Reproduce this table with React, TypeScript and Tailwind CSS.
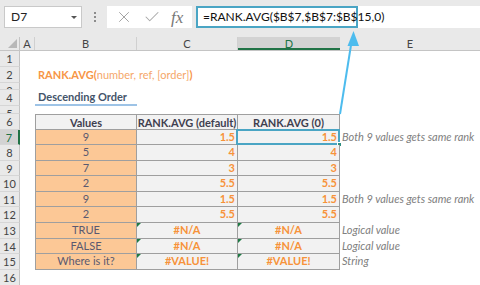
import { X, Check } from "lucide-react";

const rows = [
  { n: 1, h: "h-[16px]" },
  { n: 2, h: "h-[16px]" },
  { n: 3, h: "h-[7px]" },
  { n: 4, h: "h-[16px]" },
  { n: 5, h: "h-[8px]" },
  { n: 6, h: "h-[16px]" },
];

const data = [
  { n: 7, h: "h-[15px]", v: "9", c: "1.5", d: "1.5", note: "Both 9 values gets same rank" },
  { n: 8, h: "h-[16px]", v: "5", c: "4", d: "4" },
  { n: 9, h: "h-[15px]", v: "7", c: "3", d: "3" },
  { n: 10, h: "h-[16px]", v: "2", c: "5.5", d: "5.5" },
  { n: 11, h: "h-[15px]", v: "9", c: "1.5", d: "1.5", note: "Both 9 values gets same rank" },
  { n: 12, h: "h-[16px]", v: "2", c: "5.5", d: "5.5" },
  { n: 13, h: "h-[16px]", v: "TRUE", c: "#N/A", d: "#N/A", note: "Logical value", err: true },
  { n: 14, h: "h-[15px]", v: "FALSE", c: "#N/A", d: "#N/A", note: "Logical value", err: true },
  { n: 15, h: "h-[16px]", v: "Where is it?", c: "#VALUE!", d: "#VALUE!", note: "String", err: true },
];

const RowHead = ({ n, active }: { n: number; active?: boolean }) => (
  <div
    className={
      "w-[20px] shrink-0 h-full flex items-start justify-center overflow-hidden border-b border-[#d6d6d6] text-[11px] leading-[15px] " +
      (active
        ? "bg-[#d3d3d3] text-[#217346] border-r-2 border-r-[#217346]"
        : "bg-[#e9e9e9] text-[#444] border-r border-r-[#c4c4c4]")
    }
  >
    {n}
  </div>
);

const ErrMark = () => (
  <span className="absolute left-0 top-0 w-0 h-0 border-t-[4px] border-t-[#1e7a44] border-r-[4px] border-r-transparent" />
);

export default function App() {
  return (
    <div className="relative w-[480px] h-[285px] overflow-hidden bg-white font-['Lato',sans-serif]">
      {/* formula bar */}
      <div className="h-[37px] bg-[#e9e9e9] flex items-start pt-[6px]">
        <div className="ml-[4px] w-[78px] h-[22px] bg-white border border-[#c9c9c9] flex items-center justify-between pl-[6px] pr-[4px] text-[12px] text-[#222]">
          <span>D7</span>
          <span className="w-0 h-0 border-l-[3px] border-r-[3px] border-t-[3px] border-l-transparent border-r-transparent border-t-[#555]" />
        </div>
        <div className="w-[25px] h-[22px] flex flex-col items-center justify-center gap-[2px]">
          <span className="w-[2px] h-[2px] bg-[#8c8c8c]" />
          <span className="w-[2px] h-[2px] bg-[#8c8c8c]" />
          <span className="w-[2px] h-[2px] bg-[#8c8c8c]" />
        </div>
        <div className="w-[85px] h-[22px] bg-white flex items-center pl-[8px]">
          <X size={18} strokeWidth={1.2} className="text-[#9a9a9a]" />
          <Check size={18} strokeWidth={1.4} className="text-[#a8a8a8] ml-[10px]" />
          <span className="ml-[10px] font-['Liberation_Serif',serif] italic text-[17px] leading-none text-[#777]">fx</span>
        </div>
        <div className="ml-[4px] flex-1 h-[22px] bg-white">
          <div className="w-[162px] h-[22px] border-2 border-[#4aa5c4] flex items-center pl-[5px] text-[12px] text-[#111] whitespace-nowrap">
            =RANK.AVG($B$7,$B$7:$B$15,0)
          </div>
        </div>
      </div>

      {/* column headers */}
      <div className="flex h-[14px] bg-[#e9e9e9] text-[11px] leading-[13px] text-[#444] border-b border-[#c4c4c4]">
        <div className="w-[20px] relative border-r border-[#c4c4c4]">
          <span className="absolute right-[2px] bottom-[2px] w-0 h-0 border-l-[9px] border-l-transparent border-b-[9px] border-b-[#b8b8b8]" />
        </div>
        <div className="w-[15px] text-center border-r border-[#d0d0d0]">A</div>
        <div className="w-[102px] text-center border-r border-[#d0d0d0]">B</div>
        <div className="w-[101px] text-center border-r border-[#d0d0d0]">C</div>
        <div className="w-[102px] text-center bg-[#d3d3d3] text-[#217346] border-b-2 border-[#217346]">D</div>
        <div className="flex-1 text-center">E</div>
      </div>

      {/* rows 1-6 */}
      {rows.map((r) => (
        <div key={r.n} className={"flex " + r.h}>
          <RowHead n={r.n} />
          <div className="w-[15px]" />
          {r.n === 2 && (
            <div className="pl-[3px] text-[11px] leading-[16px] whitespace-nowrap text-[#f79646]">
              <span className="font-bold">RANK.AVG(</span>
              <span className="text-[#f5a76a]">number, ref, [order]</span>
              <span className="font-bold">)</span>
            </div>
          )}
          {r.n === 4 && (
            <div className="w-[102px] pl-[3px] text-[11px] leading-[14px] font-bold text-[#44546a] border-b-2 border-[#9dc3e6]">
              Descending Order
            </div>
          )}
          {r.n === 6 && (
            <>
              <div className="w-[102px] text-center text-[11px] leading-[15px] font-bold text-[#3f3f4f] bg-[#f2f2f2] border border-[#9f9f9f]">
                Values
              </div>
              <div className="w-[101px] text-center text-[11px] leading-[15px] font-bold text-[#3f3f4f] bg-[#f2f2f2] border-y border-r border-[#9f9f9f] whitespace-nowrap">
                RANK.AVG (default)
              </div>
              <div className="w-[102px] text-center text-[11px] leading-[15px] font-bold text-[#3f3f4f] bg-[#f2f2f2] border-y border-r border-[#9f9f9f]">
                RANK.AVG (0)
              </div>
            </>
          )}
        </div>
      ))}

      {/* data rows */}
      {data.map((r) => (
        <div key={r.n} className={"flex " + r.h}>
          <RowHead n={r.n} active={r.n === 7} />
          <div className="w-[15px]" />
          <div className="w-[102px] text-center text-[11px] leading-[14px] text-[#595970] bg-[#fcc896] border-x border-b border-[#9f9f9f]">
            {r.v}
          </div>
          <div
            className={
              "relative w-[101px] text-[11px] leading-[14px] font-bold text-[#f7923a] bg-[#f2f2f2] border-r border-b border-[#9f9f9f] " +
              (r.err ? "text-center" : "text-right pr-[2px]")
            }
          >
            {r.err && <ErrMark />}
            {r.c}
          </div>
          <div
            className={
              "relative w-[102px] text-[11px] leading-[14px] font-bold text-[#f7923a] bg-[#f2f2f2] border-r border-b border-[#9f9f9f] " +
              (r.err ? "text-center" : "text-right pr-[2px]")
            }
          >
            {r.err && <ErrMark />}
            {r.d}
            {r.n === 7 && (
              <span className="absolute -left-[2px] -top-[1px] -right-[1px] -bottom-[1px] border-2 border-[#4aa5c4]">
                <span className="absolute -right-[4px] -bottom-[4px] w-[5px] h-[5px] bg-[#2f8f80] border border-white" />
              </span>
            )}
          </div>
          <div className="flex-1 pl-[2px] text-[11px] leading-[14px] italic text-[#808080] whitespace-nowrap">
            {r.note}
          </div>
        </div>
      ))}

      <div className="flex h-[16px]">
        <RowHead n={16} />
      </div>

      {/* callout arrow */}
      <svg className="absolute inset-0 pointer-events-none" width="480" height="285">
        <line x1="340" y1="114" x2="351.5" y2="42" stroke="#4dbcee" strokeWidth="2" />
        <polygon points="353.5,31 347.5,46 359,46" fill="#4dbcee" />
      </svg>
    </div>
  );
}
